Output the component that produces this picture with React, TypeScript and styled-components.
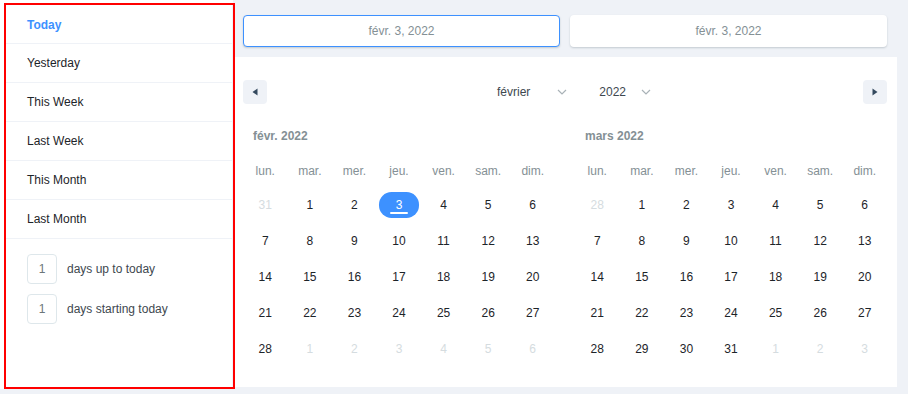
import React from "react";
import styled, { createGlobalStyle } from "styled-components";

const GlobalStyle = createGlobalStyle`
    html, body {
        margin: 0;
        background: #eff2f7;
    }
    body {
        font-family: "Liberation Sans", Arial, sans-serif;
        font-size: 12px;
    }
    * {
        box-sizing: border-box;
    }
`;

const Shell = styled.div`
    display: flex;
    align-items: flex-start;
    width: 908px;
    height: 394px;
    overflow: hidden;
`;

const SideColumn = styled.div`
    background: #fff;
    padding: 5px 0 2px 6px;
`;

const Sidebar = styled.nav`
    position: relative;
    z-index: 1;
    width: 227px;
    height: 382px;
    background: #fff;
    border-right: 1px solid #eff2f7;
    outline: 2px solid #ff0000;
`;

const RangeItem = styled.button<{ $active?: boolean }>`
    display: block;
    width: 100%;
    padding: ${(p) => (p.$active ? "11px 20px 9px 21px" : "10px 20px 10px 21px")};
    border: 0;
    border-bottom: 1px solid #eff2f7;
    background: #fff;
    text-align: left;
    font-family: inherit;
    font-size: 12px;
    line-height: 18px;
    color: ${(p) => (p.$active ? "#3d91ff" : "#1d2429")};
    font-weight: ${(p) => (p.$active ? 600 : 400)};
`;

const InputRanges = styled.div`
    padding: 10px 0;
`;

const InputRange = styled.div`
    display: flex;
    align-items: center;
    padding: 5px 21px;
`;

const NumberBox = styled.div`
    width: 30px;
    height: 30px;
    line-height: 28px;
    border: 1px solid #dee7eb;
    border-radius: 4px;
    text-align: center;
    color: #6c767a;
    margin-right: 10px;
`;

const InputLabel = styled.span`
    color: #3e484f;
`;

const Calendar = styled.div`
    width: 664px;
    margin-top: 5px;
    background: #fff;
`;

const DateDisplay = styled.div`
    display: flex;
    gap: 10px;
    padding: 10px;
    background: #eff2f7;
`;

const DateItem = styled.div<{ $active?: boolean }>`
    flex: 1;
    height: 32px;
    line-height: 30px;
    border-radius: 4px;
    background: #fff;
    border: 1px solid ${(p) => (p.$active ? "#3d91ff" : "transparent")};
    box-shadow: 0 1px 2px 0 rgba(35, 57, 66, 0.21);
    text-align: center;
    color: #849095;
`;

const MonthAndYear = styled.div`
    display: flex;
    align-items: center;
    height: 60px;
    padding-top: 10px;
`;

const NavButton = styled.button`
    width: 24px;
    height: 24px;
    margin: 0 10px;
    padding: 0;
    border: 0;
    border-radius: 4px;
    background: #eff2f7;
    display: flex;
    align-items: center;
    justify-content: center;
`;

const Pickers = styled.div`
    flex: 1;
    display: flex;
    justify-content: center;
    padding-left: 16px;
    gap: 14px;
`;

const Picker = styled.div<{ $gap: number }>`
    display: inline-flex;
    align-items: center;
    gap: ${(p) => p.$gap}px;
    padding: 10px 8px 10px 10px;
    color: #3e484f;
    font-size: 12px;
    line-height: 14px;
`;

const Months = styled.div`
    display: flex;
`;

const Month = styled.div`
    width: 332px;
    padding: 0 10px 20px;
`;

const MonthName = styled.div`
    padding: 10px;
    line-height: 18px;
    font-weight: 600;
    color: #849095;
`;

const Week = styled.div`
    display: grid;
    grid-template-columns: repeat(7, 1fr);
`;

const WeekDay = styled.div`
    line-height: 32px;
    text-align: center;
    color: #849095;
`;

const DayCell = styled.div`
    display: flex;
    height: 36px;
    padding: 5px 2px;
`;

const DayPill = styled.span<{ $passive?: boolean; $selected?: boolean; $today?: boolean }>`
    position: relative;
    flex: 1;
    display: flex;
    align-items: center;
    justify-content: center;
    border-radius: 12.5px;
    background: ${(p) => (p.$selected ? "#3d91ff" : "transparent")};
    color: ${(p) => (p.$selected ? "#fff" : p.$passive ? "#d5dce0" : "#1d2429")};

    ${(p) =>
        p.$today &&
        `&::after {
            content: "";
            position: absolute;
            bottom: 4px;
            left: 50%;
            transform: translateX(-50%);
            width: 18px;
            height: 2px;
            border-radius: 2px;
            background: ${p.$selected ? "#fff" : "#3d91ff"};
        }`}
`;

const Chevron = () => (
    <svg width="10" height="6" viewBox="0 0 10 6">
        <path d="M1 1 L5 5 L9 1" fill="none" stroke="#a9b2b7" strokeWidth="1.2" />
    </svg>
);

const Arrow = ({ dir }: { dir: "left" | "right" }) => (
    <svg width="6" height="8" viewBox="0 0 6 8">
        <path d={dir === "left" ? "M5.5 0.5 L0.5 4 L5.5 7.5 Z" : "M0.5 0.5 L5.5 4 L0.5 7.5 Z"} fill="#34495e" />
    </svg>
);

const weekDays = ["lun.", "mar.", "mer.", "jeu.", "ven.", "sam.", "dim."];

type Day = { n: number; passive?: boolean; selected?: boolean; today?: boolean };

function buildMonth(prevLast: number, days: number, lead: number, selected?: number): Day[] {
    const out: Day[] = [];
    for (let i = lead - 1; i >= 0; i--) out.push({ n: prevLast - i, passive: true });
    for (let d = 1; d <= days; d++) out.push({ n: d, selected: d === selected, today: d === selected });
    let next = 1;
    while (out.length % 7 !== 0) out.push({ n: next++, passive: true });
    return out;
}

const months = [
    { name: "févr. 2022", days: buildMonth(31, 28, 1, 3) },
    { name: "mars 2022", days: buildMonth(28, 31, 1) },
];

const ranges = ["Today", "Yesterday", "This Week", "Last Week", "This Month", "Last Month"];

export default function App() {
    return (
        <>
            <GlobalStyle />
            <Shell>
                <SideColumn>
                    <Sidebar>
                        {ranges.map((r, i) => (
                            <RangeItem key={r} $active={i === 0}>
                                {r}
                            </RangeItem>
                        ))}
                        <InputRanges>
                            <InputRange>
                                <NumberBox>1</NumberBox>
                                <InputLabel>days up to today</InputLabel>
                            </InputRange>
                            <InputRange>
                                <NumberBox>1</NumberBox>
                                <InputLabel>days starting today</InputLabel>
                            </InputRange>
                        </InputRanges>
                    </Sidebar>
                </SideColumn>
                <Calendar>
                    <DateDisplay>
                        <DateItem $active>févr. 3, 2022</DateItem>
                        <DateItem>févr. 3, 2022</DateItem>
                    </DateDisplay>
                    <MonthAndYear>
                        <NavButton>
                            <Arrow dir="left" />
                        </NavButton>
                        <Pickers>
                            <Picker $gap={27}>
                                <span>février</span>
                                <Chevron />
                            </Picker>
                            <Picker $gap={15}>
                                <span>2022</span>
                                <Chevron />
                            </Picker>
                        </Pickers>
                        <NavButton>
                            <Arrow dir="right" />
                        </NavButton>
                    </MonthAndYear>
                    <Months>
                        {months.map((m) => (
                            <Month key={m.name}>
                                <MonthName>{m.name}</MonthName>
                                <Week>
                                    {weekDays.map((w) => (
                                        <WeekDay key={w}>{w}</WeekDay>
                                    ))}
                                </Week>
                                <Week>
                                    {m.days.map((d, i) => (
                                        <DayCell key={i}>
                                            <DayPill $passive={d.passive} $selected={d.selected} $today={d.today}>
                                                {d.n}
                                            </DayPill>
                                        </DayCell>
                                    ))}
                                </Week>
                            </Month>
                        ))}
                    </Months>
                </Calendar>
            </Shell>
        </>
    );
}
